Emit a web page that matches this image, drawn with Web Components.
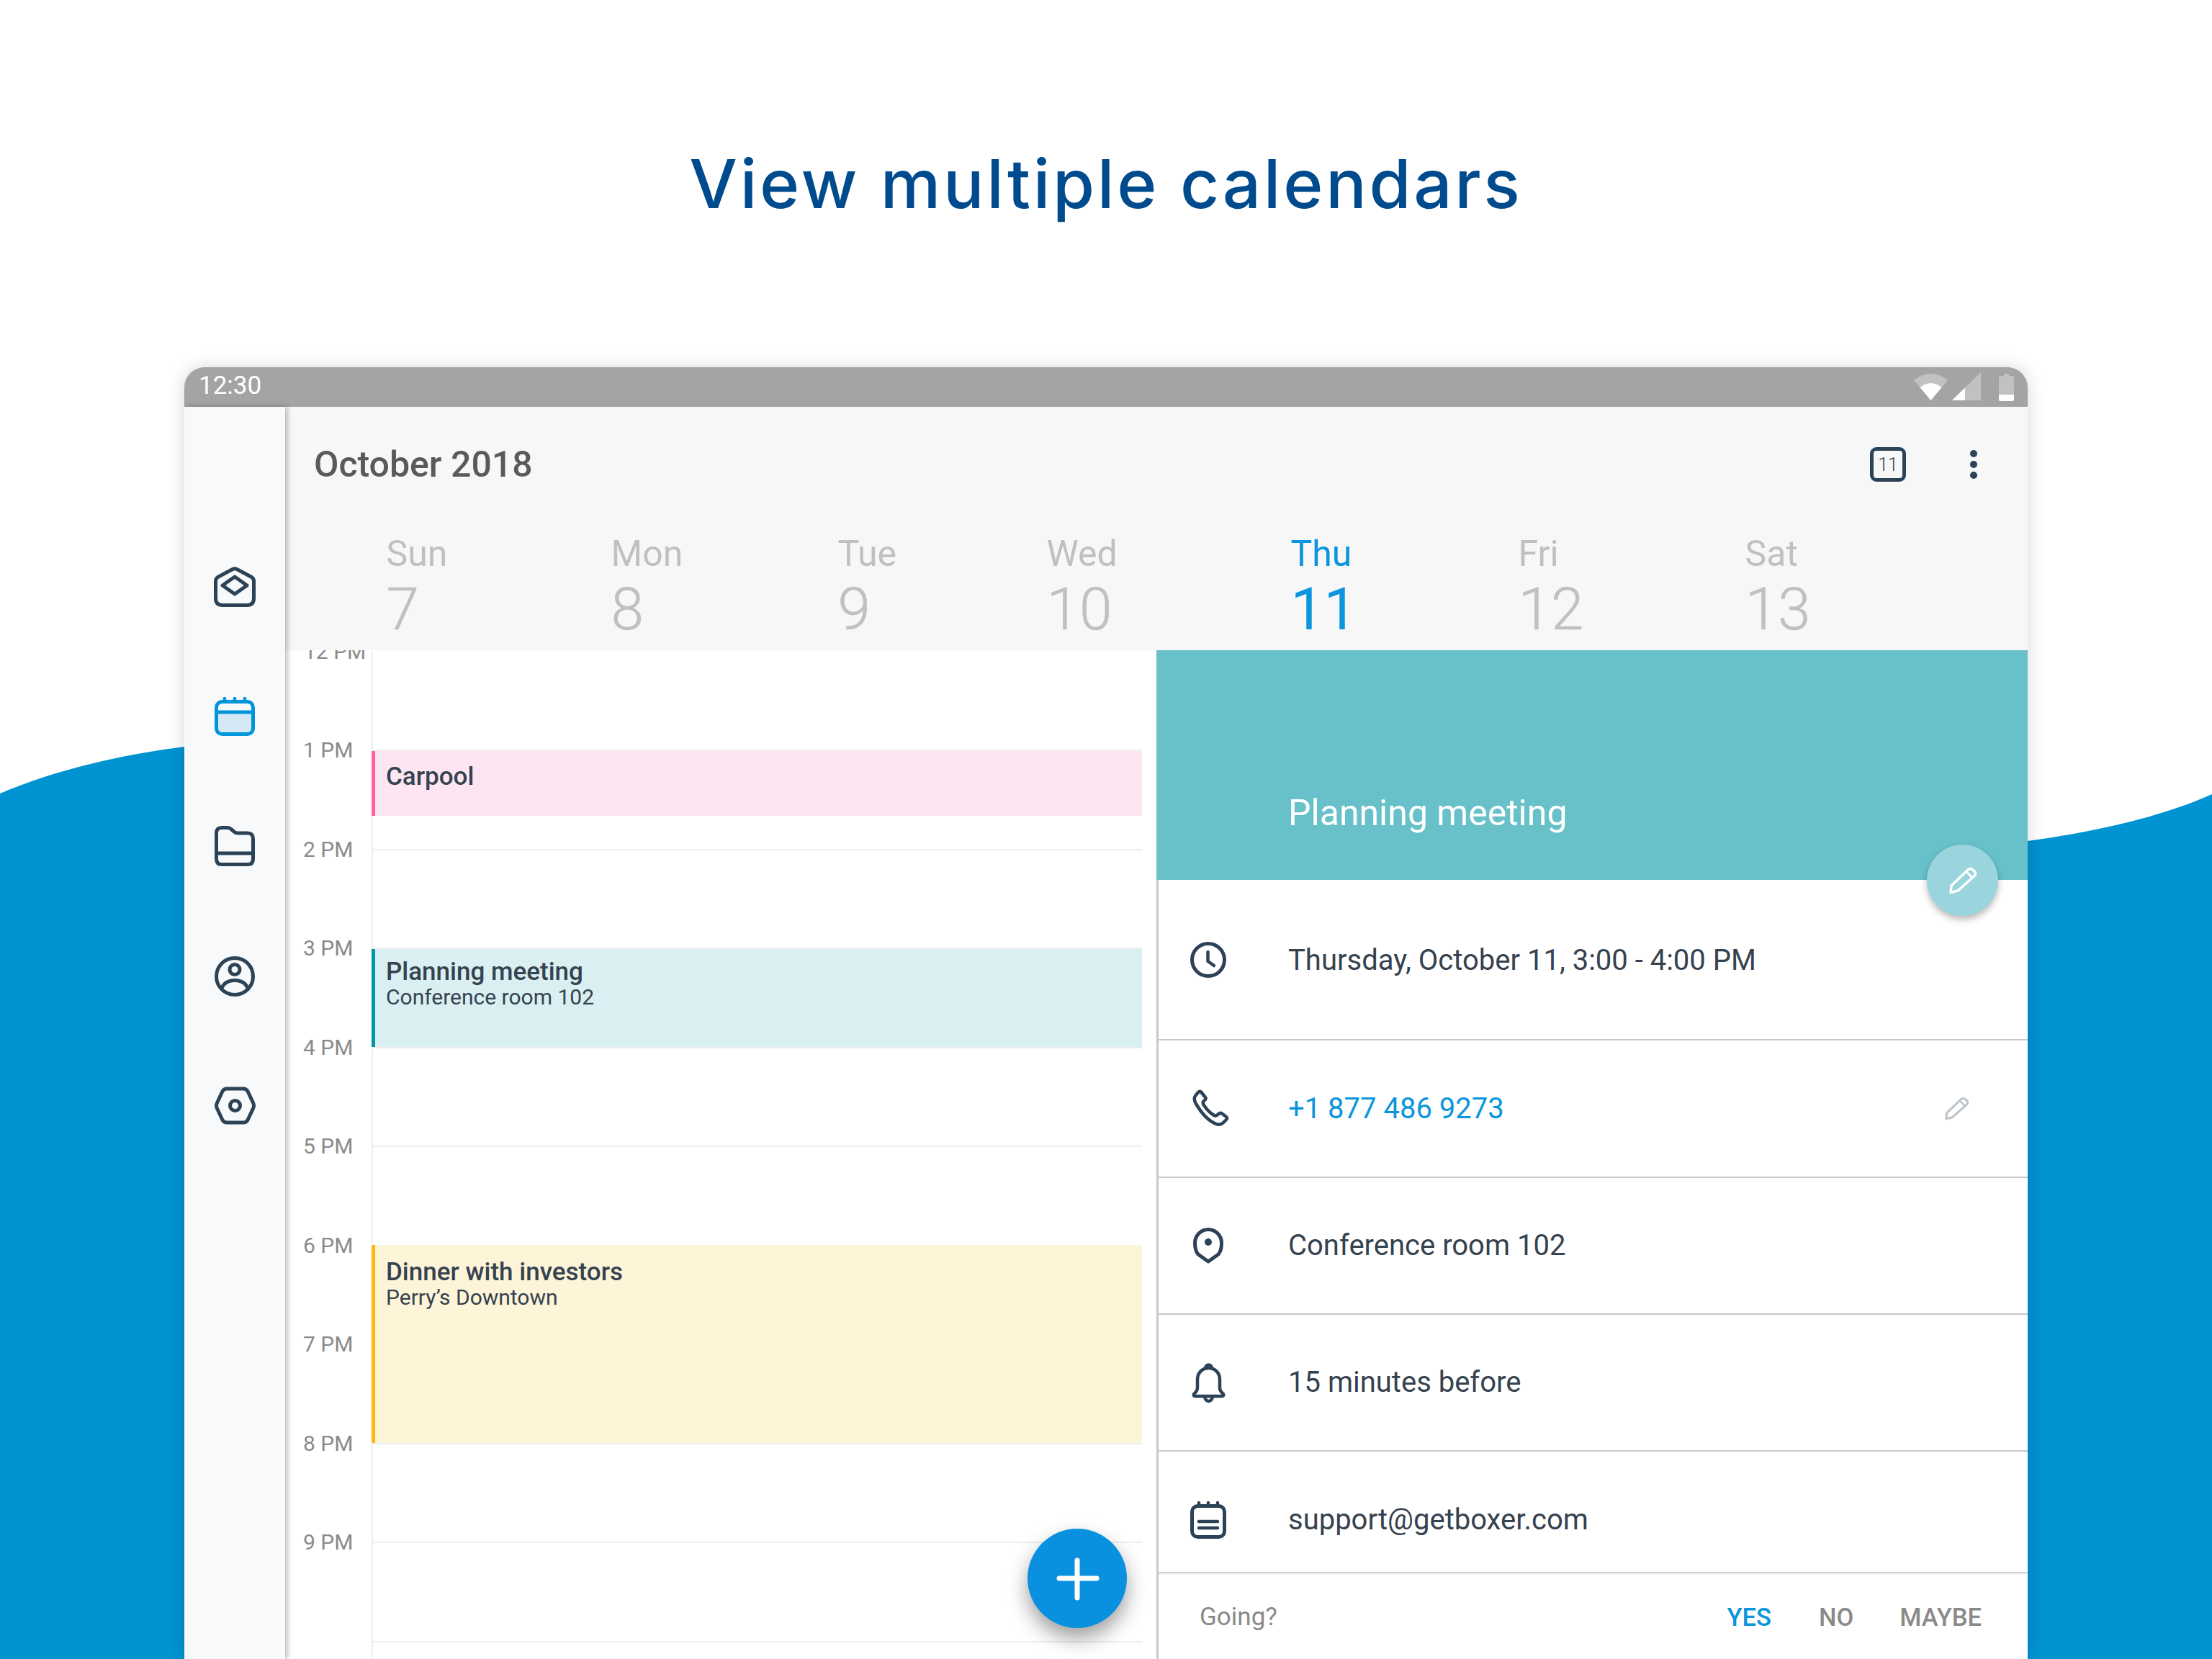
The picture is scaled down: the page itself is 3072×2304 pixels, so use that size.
<!DOCTYPE html>
<html>
<head>
<meta charset="utf-8">
<style>
  html, body { margin: 0; padding: 0; background: #fff; }
</style>
</head>
<body>
<promo-page>
  <span slot="title">View multiple calendars</span>
  <device-frame>
    <status-bar slot="status"></status-bar>
    <side-rail slot="rail">
      <icon-glyph name="inbox"></icon-glyph>
      <icon-glyph name="calendar"></icon-glyph>
      <icon-glyph name="folder"></icon-glyph>
      <icon-glyph name="person"></icon-glyph>
      <icon-glyph name="gear"></icon-glyph>
    </side-rail>
    <cal-header slot="header">
      <day-col day="Sun" num="7" style="width:312px"></day-col>
      <day-col day="Mon" num="8" style="width:315px"></day-col>
      <day-col day="Tue" num="9" style="width:290px"></day-col>
      <day-col day="Wed" num="10" style="width:339px"></day-col>
      <day-col day="Thu" num="11" today style="width:316px"></day-col>
      <day-col day="Fri" num="12" style="width:315px"></day-col>
      <day-col day="Sat" num="13"></day-col>
    </cal-header>
    <day-schedule slot="schedule">
      <hour-row label="12 PM" style="--label-left:26px;--lane-top:transparent"></hour-row>
      <hour-row label="1 PM"></hour-row>
      <hour-row label="2 PM"></hour-row>
      <hour-row label="3 PM"></hour-row>
      <hour-row label="4 PM"></hour-row>
      <hour-row label="5 PM"></hour-row>
      <hour-row label="6 PM"></hour-row>
      <hour-row label="7 PM"></hour-row>
      <hour-row label="8 PM"></hour-row>
      <hour-row label="9 PM"></hour-row>
      <hour-row label="" ></hour-row>
      <cal-event slot="events" style="top:140px;height:90px;--bg:#fde6f1;--bar:#ff5fa5;--pad:18px">Carpool</cal-event>
      <cal-event slot="events" style="top:415px;height:136px;--bg:#d9eff2;--bar:#0097a7;--pad:14px">Planning meeting<span slot="sub">Conference room 102</span></cal-event>
      <cal-event slot="events" style="top:826px;height:275px;--bg:#fef4d7;--bar:#fbb916;--pad:20px">Dinner with investors<span slot="sub">Perry’s Downtown</span></cal-event>
      <add-fab slot="events"></add-fab>
    </day-schedule>
    <event-detail slot="detail" heading="Planning meeting">
      <detail-row icon="clock" style="height:223px;--tx-top:3px">Thursday, October 11, 3:00 - 4:00 PM</detail-row>
      <detail-row icon="phone" link editable style="height:191px;--ic-left:6px">+1 877 486 9273</detail-row>
      <detail-row icon="pin" style="height:190px">Conference room 102</detail-row>
      <detail-row icon="bell" style="height:190px">15 minutes before</detail-row>
      <detail-row icon="list" last style="height:167px">support@getboxer.com</detail-row>
      <rsvp-bar></rsvp-bar>
    </event-detail>
  </device-frame>
</promo-page>

<script>
const roboto = `Roboto, "Liberation Sans", sans-serif`

const icons = {
  inbox: {w:58, h:56, svg:`
    <path d="M25.500 3.800 Q29 1.800 32.500 3.800 L52.500 14.500 Q55.500 16.500 55.500 20 V44 Q55.500 53.500 46 53.500 H12 Q2.500 53.500 2.500 44 V20 Q2.500 16.500 5.500 14.500 Z" fill="none" stroke="#2c4257" stroke-width="5" stroke-linejoin="round"/>
    <path d="M29 14 L46 26 L29 38 L12 26 Z" fill="none" stroke="#2c4257" stroke-width="5" stroke-linejoin="round"/>`},
  calendar: {w:56, h:54, svg:`
    <rect x="4" y="22" width="48" height="28" fill="#d4e9f5"/>
    <rect x="2.500" y="6.500" width="51" height="45" rx="8" fill="none" stroke="#0095d9" stroke-width="5"/>
    <path d="M2 21 H54" stroke="#0095d9" stroke-width="5"/>
    <path d="M14 2 V6 M28 2 V6 M42 2 V6" stroke="#0095d9" stroke-width="4.500" stroke-linecap="round"/>`},
  folder: {w:56, h:56, svg:`
    <path d="M2.500 10 Q2.500 2.500 10 2.500 H18 Q21 2.500 23 4.500 L27 8 Q29 10 32 10 H46 Q53.500 10 53.500 18 V46 Q53.500 53.500 46 53.500 H10 Q2.500 53.500 2.500 46 Z" fill="none" stroke="#2c4257" stroke-width="5" stroke-linejoin="round"/>
    <path d="M2 38 H54" stroke="#2c4257" stroke-width="5"/>`},
  person: {w:56, h:56, svg:`
    <circle cx="28" cy="28" r="25.500" fill="none" stroke="#2c4257" stroke-width="5"/>
    <circle cx="28" cy="18.500" r="7" fill="none" stroke="#2c4257" stroke-width="5"/>
    <path d="M9 47 Q13 33.500 28 33.500 Q43 33.500 47 47" fill="none" stroke="#2c4257" stroke-width="5"/>`},
  gear: {w:57, h:53, svg:`
    <path d="M3.500 22.500 L11 6.500 Q13 3 17 3 H40 Q44 3 46 6.500 L53.500 22.500 Q55.500 26.500 53.500 30.500 L46 46.500 Q44 50 40 50 H17 Q13 50 11 46.500 L3.500 30.500 Q1.500 26.500 3.500 22.500 Z" fill="none" stroke="#2c4257" stroke-width="5" stroke-linejoin="round"/>
    <circle cx="28.500" cy="26.500" r="7" fill="none" stroke="#2c4257" stroke-width="5"/>`},
  clock: {w:50, h:50, svg:`
    <circle cx="25" cy="25" r="22.500" fill="none" stroke="#2c4257" stroke-width="5"/>
    <path d="M24.500 14 V27 L33 33" fill="none" stroke="#2c4257" stroke-width="4.500" stroke-linecap="round" stroke-linejoin="round"/>`},
  phone: {w:50, h:51, svg:`
    <path d="M12 2.500 L18 10 Q19.500 12 17 14 L15 16 Q14 18 16 21 Q22 30 30 35 Q33 36 34.500 34.500 L37 32.500 Q39 31 41 32.500 L47 37 Q49 39 47 41 L43 45 Q39 49 33 47 Q18 41 5 19 Q1 12 4 8 L8 3 Q10 1 12 2.500 Z" fill="none" stroke="#2c4257" stroke-width="4.500" stroke-linejoin="round"/>`},
  pin: {w:42, h:50, svg:`
    <path d="M21 47 L7 37 Q2.500 32 2.500 21 A18.500 18.500 0 0 1 39.500 21 Q39.500 32 35 37 Z" fill="none" stroke="#2c4257" stroke-width="5" stroke-linejoin="round"/>
    <circle cx="21" cy="20" r="5" fill="#2c4257"/>`},
  bell: {w:47, h:56, svg:`
    <path d="M23.500 8 C14 8 8 15 8 24 V35 Q8 40 3 44 Q2 47 5 47 H42 Q45 47 44 44 Q39 40 39 35 V24 C39 15 33 8 23.500 8 Z" fill="none" stroke="#2c4257" stroke-width="4.500" stroke-linejoin="round"/>
    <path d="M19 8 a4.500 4.500 0 0 1 9 0" fill="none" stroke="#2c4257" stroke-width="4.500"/>
    <path d="M18 47 a5.500 7 0 0 0 11 0" fill="none" stroke="#2c4257" stroke-width="4.500"/>`},
  list: {w:50, h:52, svg:`
    <rect x="2.500" y="6.500" width="45" height="43" rx="8" fill="none" stroke="#2c4257" stroke-width="5"/>
    <path d="M12 2 V6 M25 2 V6 M38 2 V6" stroke="#2c4257" stroke-width="4.500" stroke-linecap="round"/>
    <path d="M12 28 H38 M12 37 H38" stroke="#2c4257" stroke-width="4.500" stroke-linecap="round"/>`},
  pencil: {w:40, h:38, svg:`
    <path d="M3 35.500 L4 26 L27 4 Q30 1.500 33 3.500 L36.500 6.500 Q38.500 9.500 36 12.500 L13 33 Z" fill="none" stroke="currentColor" stroke-width="3.500" stroke-linejoin="round"/>
    <path d="M25 7 L33.500 15" stroke="currentColor" stroke-width="3"/>`},
  wifi: {w:47, h:37, svg:`
    <path d="M23.500 37 L0 9 Q23.500 -9 47 9 Z" fill="#c1c1c1"/>
    <path d="M23.500 37 L8.500 19 Q23.500 7 38.500 19 Z" fill="#fff"/>`},
  signal: {w:40, h:39, svg:`
    <path d="M0 39 L40 0 V39 Z" fill="#c1c1c1"/>
    <path d="M0 39 L18 21.500 V39 Z" fill="#fff"/>`},
  battery: {w:21, h:38, svg:`
    <path d="M7 0 H14 V3 H19 Q21 3 21 5 V29 H0 V5 Q0 3 2 3 H7 Z" fill="#c1c1c1"/>
    <path d="M0 29 H21 V36 Q21 38 19 38 H2 Q0 38 0 36 Z" fill="#fff"/>`}
}

class IconGlyph extends HTMLElement {
  constructor(){
    super()
    this._shadowDom = this.attachShadow({mode:"open"})
  }
  connectedCallback(){
    const icon = icons[this.getAttribute("name")]
    const w = this.getAttribute("width") || icon.w
    const h = this.getAttribute("height") || icon.h
    this._shadowDom.innerHTML = `
      <style>
        :host { display: block; width: ${w}px; height: ${h}px; line-height: 0; }
        svg { display: block; overflow: visible; }
      </style>
      <svg width="${w}" height="${h}" viewBox="0 0 ${icon.w} ${icon.h}">${icon.svg}</svg>`
  }
}
customElements.define("icon-glyph", IconGlyph)

class PromoPage extends HTMLElement {
  constructor(){
    super()
    this.attachShadow({mode:"open"}).innerHTML = `
      <style>
        :host { display: block; position: relative; width: 3072px; height: 2304px; overflow: hidden; background: #fff; }
        .wave { position: absolute; left: 0; top: 0; }
        .head { position: relative; height: 510px; box-sizing: border-box; padding-top: 192px; text-align: center;
                font: 500 94px/127px Inter, "Open Sans", sans-serif; color: #004b8d; letter-spacing: 3.7px; }
        .body { position: relative; padding: 0 256px; }
      </style>
      <svg class="wave" width="3072" height="2304" viewBox="0 0 3072 2304">
        <path d="M0 1102 C80 1068 170 1048 256 1037 L2816 1168 C2910 1155 3000 1135 3072 1103 V2304 H0 Z" fill="#0093d2"/>
      </svg>
      <div class="head"><slot name="title"></slot></div>
      <div class="body"><slot></slot></div>`
  }
}
customElements.define("promo-page", PromoPage)

class DeviceFrame extends HTMLElement {
  constructor(){
    super()
    this.attachShadow({mode:"open"}).innerHTML = `
      <style>
        :host { display: flex; flex-direction: column; height: 1794px; background: #fff; border-radius: 28px 28px 0 0;
                box-shadow: 0 0 24px rgba(0,0,0,.16); overflow: hidden; font-family: ${roboto}; }
        .content { flex: 1; display: flex; min-height: 0; }
        .main { flex: 1; display: flex; flex-direction: column; min-width: 0; }
        .panes { flex: 1; display: flex; min-height: 0; }
      </style>
      <slot name="status"></slot>
      <div class="content">
        <slot name="rail"></slot>
        <div class="main">
          <slot name="header"></slot>
          <div class="panes">
            <slot name="schedule"></slot>
            <slot name="detail"></slot>
          </div>
        </div>
      </div>`
  }
}
customElements.define("device-frame", DeviceFrame)

class StatusBar extends HTMLElement {
  constructor(){
    super()
    this.attachShadow({mode:"open"}).innerHTML = `
      <style>
        :host { display: flex; align-items: center; height: 55px; background: #a4a4a4; color: #fff;
                padding: 0 19px 0 20px; font-size: 35px; }
        .time { flex: 1; padding-bottom: 4px; }
        .wifi { margin-right: 6px; }
        .signal { margin-right: 25px; margin-top: -2px; }
      </style>
      <div class="time">12:30</div>
      <icon-glyph class="wifi" name="wifi"></icon-glyph>
      <icon-glyph class="signal" name="signal"></icon-glyph>
      <icon-glyph name="battery"></icon-glyph>`
  }
}
customElements.define("status-bar", StatusBar)

class SideRail extends HTMLElement {
  constructor(){
    super()
    this.attachShadow({mode:"open"}).innerHTML = `
      <style>
        :host { display: flex; flex-direction: column; align-items: center; gap: 125px; box-sizing: border-box;
                width: 140px; flex: none; padding-top: 222px; background: #f8f9fb; position: relative; z-index: 3;
                box-shadow: 3px 0 7px rgba(0,0,0,.28); }
      </style>
      <slot></slot>`
  }
}
customElements.define("side-rail", SideRail)

class CalHeader extends HTMLElement {
  constructor(){
    super()
    this.attachShadow({mode:"open"}).innerHTML = `
      <style>
        :host { display: block; height: 338px; background: #f7f7f7; flex: none; }
        .bar { display: flex; align-items: center; height: 160px; padding-left: 40px; }
        h1 { flex: 1; margin: 0; font: 500 50px/160px ${roboto}; color: #5a5a5a; }
        .today { box-sizing: border-box; width: 50px; height: 48px; border: 5px solid #2c4257; border-radius: 9px;
                 font: 300 25px/40px ${roboto}; color: #2c4257; text-align: center; margin-right: 89px; }
        .more { display: flex; flex-direction: column; gap: 5px; margin-right: 70px; }
        .more i { display: block; width: 10px; height: 10px; border-radius: 50%; background: #2c4257; }
        .days { display: flex; padding-left: 140.500px; }
      </style>
      <div class="bar">
        <h1>October 2018</h1>
        <div class="today">11</div>
        <div class="more"><i></i><i></i><i></i></div>
      </div>
      <div class="days"><slot></slot></div>`
  }
}
customElements.define("cal-header", CalHeader)

class DayCol extends HTMLElement {
  constructor(){
    super()
    this._shadowDom = this.attachShadow({mode:"open"})
  }
  connectedCallback(){
    this._shadowDom.innerHTML = `
      <style>
        :host { display: block; color: #c0c0c0; padding-top: 15.500px; }
        :host([today]) { color: #0a95dc; }
        .d { font: 400 50px/56px ${roboto}; }
        .n { font: 300 82px/88px ${roboto}; margin-top: 5px; -webkit-text-stroke: .5px currentColor; }
        :host([today]) .n { font-weight: 400; -webkit-text-stroke: 0; }
      </style>
      <div class="d">${this.getAttribute("day")}</div>
      <div class="n">${this.getAttribute("num")}</div>`
  }
}
customElements.define("day-col", DayCol)

class DaySchedule extends HTMLElement {
  constructor(){
    super()
    this.attachShadow({mode:"open"}).innerHTML = `
      <style>
        :host { display: block; position: relative; width: 1210px; flex: none; overflow: hidden; background: #fff; }
        .rows { margin-top: .5px; }
      </style>
      <div class="rows"><slot></slot></div>
      <slot name="events"></slot>`
  }
}
customElements.define("day-schedule", DaySchedule)

class HourRow extends HTMLElement {
  constructor(){
    super()
    this._shadowDom = this.attachShadow({mode:"open"})
  }
  connectedCallback(){
    this._shadowDom.innerHTML = `
      <style>
        :host { display: flex; height: 137.5px; color: #8a8a8a; }
        .label { box-sizing: border-box; width: 120px; padding-left: var(--label-left, 25px); margin-top: -14px;
                 font: 400 30px/30px ${roboto}; white-space: nowrap; }
        .lane { flex: 1; margin-right: 20px; border-left: 2px solid #eee; border-top: 2px solid var(--lane-top, #eee); }
      </style>
      <div class="label">${this.getAttribute("label")}</div>
      <div class="lane"></div>`
  }
}
customElements.define("hour-row", HourRow)

class CalEvent extends HTMLElement {
  constructor(){
    super()
    this.attachShadow({mode:"open"}).innerHTML = `
      <style>
        :host { display: block; position: absolute; left: 120px; width: 1070px; box-sizing: border-box;
                background: var(--bg); border-left: 5px solid var(--bar); padding: var(--pad) 0 0 15px;
                color: #35424f; }
        .t { font: 500 35px/35px ${roboto}; }
        .s { font: 400 30px/36px ${roboto}; }
      </style>
      <div class="t"><slot></slot></div>
      <div class="s"><slot name="sub"></slot></div>`
  }
}
customElements.define("cal-event", CalEvent)

class AddFab extends HTMLElement {
  constructor(){
    super()
    this.attachShadow({mode:"open"}).innerHTML = `
      <style>
        :host { display: block; position: absolute; left: 1031px; top: 1220px; width: 138px; height: 138px; border-radius: 50%;
                background: #0991df; box-shadow: 0 14px 28px rgba(0,0,0,.38); }
        svg { display: block; }
      </style>
      <svg width="138" height="138" viewBox="0 0 138 138">
        <path d="M69 44 V96 M44 69 H96" stroke="#fff" stroke-width="7" stroke-linecap="round"/>
      </svg>`
  }
}
customElements.define("add-fab", AddFab)

class EventDetail extends HTMLElement {
  constructor(){
    super()
    this._shadowDom = this.attachShadow({mode:"open"})
  }
  connectedCallback(){
    this._shadowDom.innerHTML = `
      <style>
        :host { display: flex; flex-direction: column; width: 1210px; flex: none; background: #fff; position: relative; }
        .hero { position: relative; display: flex; align-items: flex-end; box-sizing: border-box; height: 319px; flex: none;
                background: #68c0c9; padding: 0 0 63px 183px; color: #fff; font: 400 50px/60px ${roboto}; }
        .edit { position: absolute; right: 41px; bottom: -50px; width: 99px; height: 99px; border-radius: 50%;
                background: #9ad5dd; color: #fff; box-shadow: 0 5px 10px rgba(0,0,0,.28);
                display: flex; align-items: center; justify-content: center; z-index: 2; }
        .rows { flex: 1; border-left: 3px solid #c8c8c8; display: flex; flex-direction: column; min-height: 0; }
      </style>
      <div class="hero">
        ${this.getAttribute("heading")}
        <div class="edit"><icon-glyph name="pencil"></icon-glyph></div>
      </div>
      <div class="rows"><slot></slot></div>`
  }
}
customElements.define("event-detail", EventDetail)

class DetailRow extends HTMLElement {
  constructor(){
    super()
    this._shadowDom = this.attachShadow({mode:"open"})
  }
  connectedCallback(){
    const pen = this.hasAttribute("editable")
      ? `<icon-glyph class="pen" name="pencil" width="35" height="33"></icon-glyph>` : ""
    this._shadowDom.innerHTML = `
      <style>
        :host { display: flex; align-items: center; flex: none; box-sizing: border-box; border-bottom: 2px solid #c8c8c8;
                font: 400 40px/48px ${roboto}; color: #35424f; }
        :host([last]) { padding-top: 23px; border-bottom-width: 0; }
        .ic { display: flex; justify-content: center; box-sizing: border-box; width: 138px; margin-right: 42px;
              padding-left: var(--ic-left, 0); }
        .tx { flex: 1; padding-top: var(--tx-top, 0); }
        :host([link]) .tx { color: #0a95dc; }
        .pen { color: #bcc3c9; margin-right: 81px; }
      </style>
      <div class="ic"><icon-glyph name="${this.getAttribute("icon")}"></icon-glyph></div>
      <div class="tx"><slot></slot></div>
      ${pen}`
  }
}
customElements.define("detail-row", DetailRow)

class RsvpBar extends HTMLElement {
  constructor(){
    super()
    this.attachShadow({mode:"open"}).innerHTML = `
      <style>
        :host { display: flex; align-items: center; flex: 1; padding: 2px 64px 0 57px; gap: 66px;
                font: 500 34.500px/40px ${roboto}; color: #8a8a8a;
                border-top: 2px solid #d2d2d2; box-shadow: inset 0 3px 3px -2px rgba(0,0,0,.08); }
        .q { flex: 1; font-weight: 400; font-size: 35px; }
        .yes { color: #0a95dc; }
        .no { margin-right: -2px; }
      </style>
      <div class="q">Going?</div>
      <div class="yes">YES</div>
      <div class="no">NO</div>
      <div>MAYBE</div>`
  }
}
customElements.define("rsvp-bar", RsvpBar)
</script>
</body>
</html>
